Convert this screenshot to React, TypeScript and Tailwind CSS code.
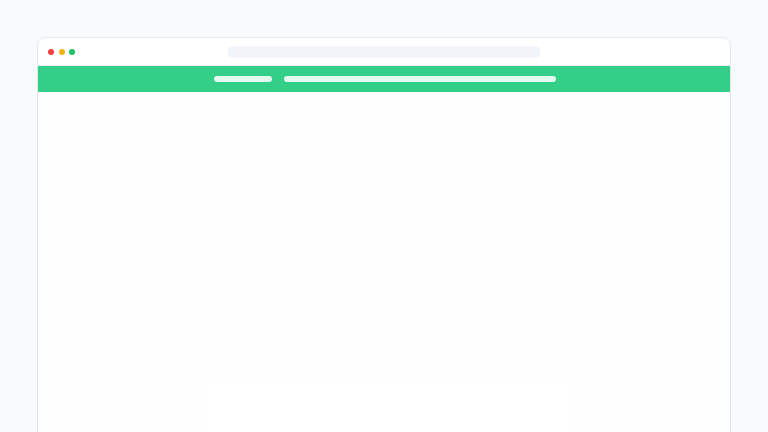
export default function App() {
  return (
    <div className="w-[768px] h-[432px] overflow-hidden bg-[#f8fafc] pt-[37px]" style={{ fontFamily: '"Liberation Sans", sans-serif' }}>
      <div className="mx-auto w-[694px] h-[420px] rounded-[8px] border border-[#e2e8f0] bg-white overflow-hidden flex flex-col">
        <div className="h-[28px] flex items-center border-b border-[#e8edf3] bg-white shrink-0">
          <div className="flex items-center gap-[4.5px] pl-[10px]">
            <span className="w-[6px] h-[6px] rounded-full bg-[#f43f3f]" />
            <span className="w-[6px] h-[6px] rounded-full bg-[#f2b20c]" />
            <span className="w-[6px] h-[6px] rounded-full bg-[#1cc462]" />
          </div>
          <div className="ml-[153px] w-[312px] h-[12px] rounded-[4px] bg-[#f0f3f8]" />
        </div>
        <div className="h-[26px] bg-[#33ce87] flex items-center justify-center gap-[12px] shrink-0 pl-[2px] pb-[1px]">
          <span className="w-[58px] h-[6px] rounded-full bg-[#e4f9ef]" />
          <span className="w-[272px] h-[6px] rounded-full bg-[#e4f9ef]" />
        </div>
        <div className="flex-1 bg-[#fefefe] flex flex-col pt-[289px] pl-[166px]">
          <div className="w-[369px] h-[60px] bg-white" />
        </div>
      </div>
    </div>
  );
}
